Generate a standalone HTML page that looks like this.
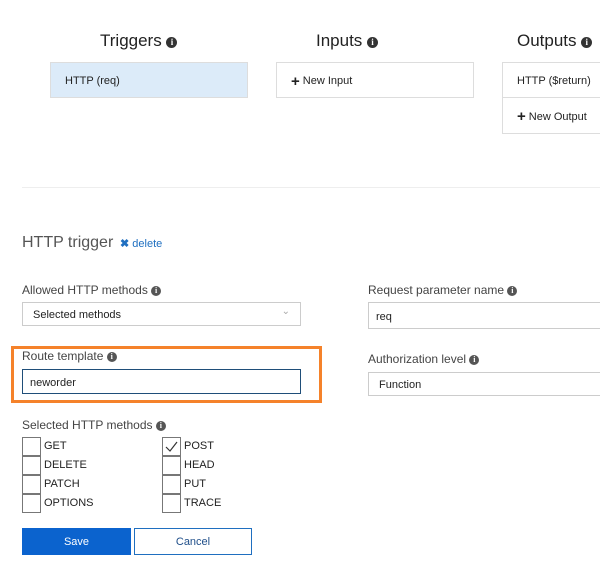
<!DOCTYPE html>
<html><head><style>
*{box-sizing:border-box;margin:0;padding:0}
body{width:600px;height:564px;background:#fff;font-family:"Liberation Sans",sans-serif;color:#333;position:relative;overflow:hidden}
.a{position:absolute}
.h{font-size:17px;color:#222;white-space:nowrap}
.i{display:inline-block;width:11px;height:11px;border-radius:50%;background:#333;color:#fff;font-size:9px;line-height:11px;text-align:center;font-weight:bold;vertical-align:1px;font-family:"Liberation Serif",serif}
.box{border:1px solid #ddd;font-size:11px;color:#222;padding-left:14px;display:flex;align-items:center}
.lbl{font-size:12px;color:#444;white-space:nowrap}
.inp{border:1px solid #ccc;font-size:11px;color:#222;padding-left:9px;display:flex;align-items:center;padding-top:2px}
.cb{width:19px;height:19px;border:1px solid #777;background:#fff}
.ct{font-size:11px;color:#222}
.ii{width:10px;height:10px;font-size:8px;line-height:10px;background:#555}
</style></head><body>
<div class="a h" style="left:100px;top:31px">Triggers <span class="i">i</span></div>
<div class="a h" style="left:316px;top:31px">Inputs <span class="i">i</span></div>
<div class="a h" style="left:517px;top:31px">Outputs <span class="i">i</span></div>
<div class="a box" style="left:50px;top:62px;width:198px;height:36px;background:#dcebf9;padding-top:2px">HTTP (req)</div>
<div class="a box" style="left:276px;top:62px;width:198px;height:36px;padding-top:2px"><b style="font-size:15px;margin-right:3px">+</b>New Input</div>
<div class="a box" style="left:502px;top:62px;width:110px;height:36px;padding-top:2px">HTTP ($return)</div>
<div class="a box" style="left:502px;top:97px;width:110px;height:37px;padding-top:2px"><b style="font-size:15px;margin-right:3px">+</b>New Output</div>
<div class="a" style="left:22px;top:187px;width:578px;height:1px;background:#eee"></div>
<div class="a" style="left:22px;top:234px;font-size:16px;color:#555">HTTP trigger</div>
<div class="a" style="left:120px;top:237px;font-size:11px;color:#1f6fc0"><b>✖</b> delete</div>
<div class="a lbl" style="left:22px;top:283px">Allowed HTTP methods <span class="i ii">i</span></div>
<div class="a inp" style="left:22px;top:302px;width:279px;height:24px;padding-left:10px">Selected methods<span style="position:absolute;right:10px;top:3px;color:#aaa;font-size:10px">&#8964;</span></div>
<div class="a" style="left:11px;top:346px;width:311px;height:57px;border:3px solid #f5822a"></div>
<div class="a lbl" style="left:22px;top:349px">Route template <span class="i ii">i</span></div>
<div class="a inp" style="left:22px;top:369px;width:279px;height:25px;border-color:#1f4e79;padding-left:7px">neworder</div>
<div class="a lbl" style="left:368px;top:283px">Request parameter name <span class="i ii">i</span></div>
<div class="a inp" style="left:368px;top:302px;width:240px;height:27px;padding-left:7px">req</div>
<div class="a lbl" style="left:368px;top:352px">Authorization level <span class="i ii">i</span></div>
<div class="a inp" style="left:368px;top:372px;width:240px;height:24px;padding-left:10px">Function</div>
<div class="a lbl" style="left:22px;top:418px">Selected HTTP methods <span class="i ii">i</span></div>
<div class="a cb" style="left:22px;top:437px"></div><div class="a ct" style="left:44px;top:440px">GET</div>
<div class="a cb" style="left:22px;top:456px"></div><div class="a ct" style="left:44px;top:459px">DELETE</div>
<div class="a cb" style="left:22px;top:475px"></div><div class="a ct" style="left:44px;top:478px">PATCH</div>
<div class="a cb" style="left:22px;top:494px"></div><div class="a ct" style="left:44px;top:497px">OPTIONS</div>
<div class="a cb" style="left:162px;top:437px"><svg width="17" height="17"><path d="M3 9 L7 13 L14 4" stroke="#333" stroke-width="1.2" fill="none"/></svg></div><div class="a ct" style="left:184px;top:440px">POST</div>
<div class="a cb" style="left:162px;top:456px"></div><div class="a ct" style="left:184px;top:459px">HEAD</div>
<div class="a cb" style="left:162px;top:475px"></div><div class="a ct" style="left:184px;top:478px">PUT</div>
<div class="a cb" style="left:162px;top:494px"></div><div class="a ct" style="left:184px;top:497px">TRACE</div>
<div class="a" style="left:22px;top:528px;width:109px;height:27px;background:#0b63ce;color:#fff;font-size:11px;text-align:center;line-height:29px">Save</div>
<div class="a" style="left:134px;top:528px;width:118px;height:27px;border:1px solid #1f6fc0;color:#1f4e89;font-size:11px;text-align:center;line-height:27px">Cancel</div>
</body></html>
